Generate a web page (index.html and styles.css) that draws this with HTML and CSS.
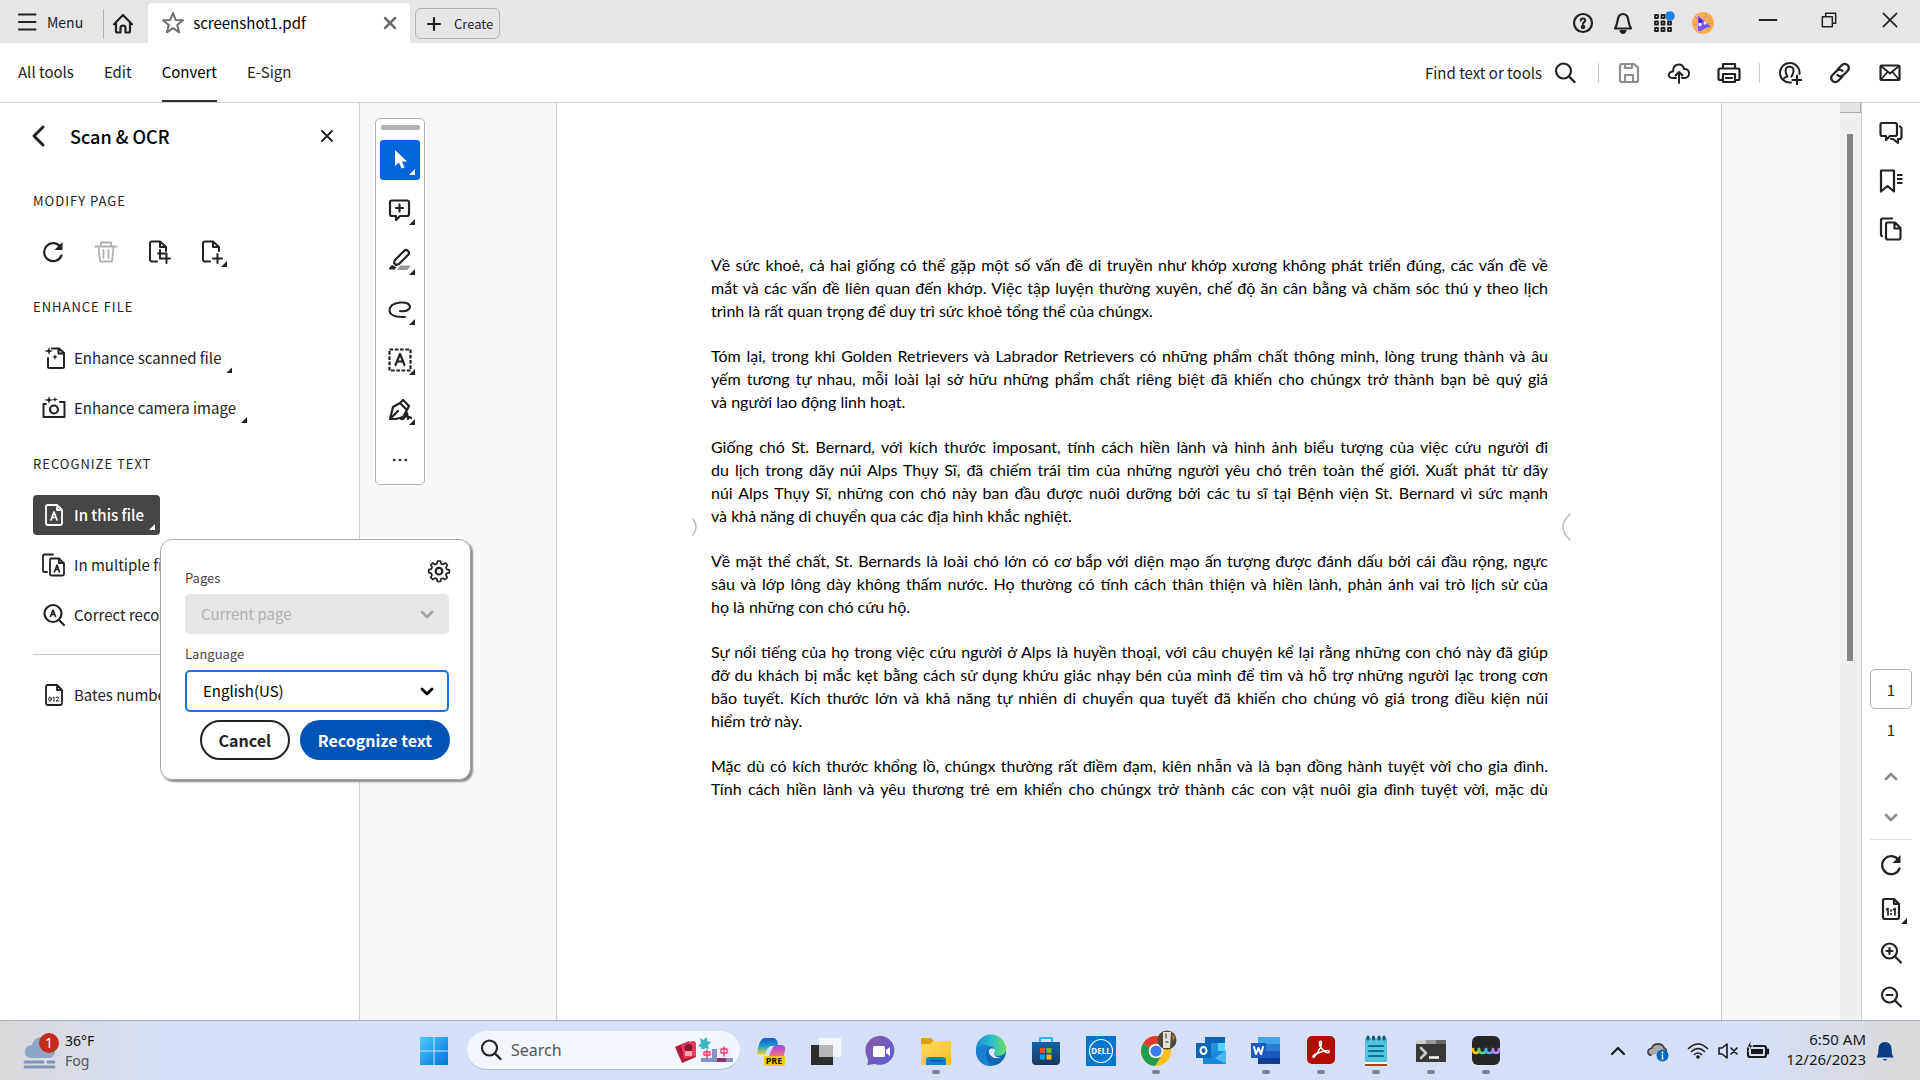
FILE: index.html
```html
<!DOCTYPE html>
<html lang="en">
<head>
<meta charset="utf-8">
<title>screenshot1.pdf</title>
<link rel="stylesheet" href="styles.css">
</head>
<body>
<svg class="sprite" aria-hidden="true">
  <defs>
    <symbol id="menu" viewBox="0 0 24 24"><path d="M4 4.500h16.500M4 12h16.500M4 19.500h16.500" stroke-width="2"/></symbol>
    <symbol id="home" viewBox="0 0 24 24"><path d="M3 12.200 12 3l9 9.200M5 11v8q0 1.500 1.500 1.500h3V16q0-2.300 2.500-2.300t2.500 2.300v4.500h3q1.500 0 1.500-1.500v-8" stroke-width="2.200"/></symbol>
    <symbol id="star" viewBox="0 0 24 24"><path d="m12 2 2.700 7 7.300.3-5.800 4.700 2 7.300-6.200-4.200-6.200 4.200 2-7.300L2 9.300 9.300 9z" stroke-width="2"/></symbol>
    <symbol id="close" viewBox="0 0 24 24"><path d="m6 6 12 12M18 6 6 18"/></symbol>
    <symbol id="plus" viewBox="0 0 24 24"><path d="M12 6v12M6 12h12"/></symbol>
    <symbol id="help" viewBox="0 0 24 24"><circle cx="12" cy="12" r="9"/><path d="M9.700 9.600q.2-2.100 2.300-2.100 2.200 0 2.200 1.900 0 1.100-1.200 1.800-1 .6-1 1.900" stroke-width="2"/><circle cx="12" cy="16" r="1.200" class="solid"/></symbol>
    <symbol id="bell" viewBox="0 0 24 24"><path d="M12 3c-7 0-4 9-8 14.500h16C16 12 19 3 12 3z"/><path d="M9.500 20q2.500 4 5 0z" class="solid"/></symbol>
    <symbol id="apps" viewBox="0 0 24 24"><path d="M4 4h3v3H4zM10.500 4h3v3h-3zM4 10.500h3v3H4zM10.500 10.500h3v3h-3zM17 10.500h3v3h-3zM4 17h3v3H4zM10.500 17h3v3h-3zM17 17h3v3h-3z" stroke-width="1.800"/><circle cx="19" cy="5" r="4.800" fill="#2680eb" stroke="none"/></symbol>
    <symbol id="avatar" viewBox="0 0 24 24"><circle cx="12" cy="12" r="11" fill="#ffad4f" stroke="none"/><path d="m4 6 4 2M3 14l4-1M15 2l-1 5M20 6l-4 4M22 13l-5-1M18 20l-4-3M9 22l1-4" stroke="#a3a58d" stroke-width="1"/><path d="M7 5v15q5 0 7-3l6-1-5-5z" fill="#7754ed" stroke="none"/><path d="M8 7v6l4-3z" fill="#3e24ad" stroke="none"/><circle cx="9" cy="13.500" r="1.700" fill="#fff" stroke="none"/><circle cx="14" cy="12" r="1.500" fill="#fff" stroke="none"/></symbol>
    <symbol id="minimize" viewBox="0 0 24 24"><path d="M2 12h20" stroke-width="2.400"/></symbol>
    <symbol id="restore" viewBox="0 0 24 24"><path d="M4 8h12v12H4zM8 8V4h12v12h-4" stroke-width="1.800"/></symbol>
    <symbol id="window-close" viewBox="0 0 24 24"><path d="m4 4 16 16M20 4 4 20" stroke-width="2"/></symbol>
    <symbol id="search" viewBox="0 0 24 24"><circle cx="10.500" cy="10" r="7.500"/><path d="m16 15.500 5.500 5.500" stroke-width="2.400"/></symbol>
    <symbol id="save" viewBox="0 0 24 24"><path d="M3 5q0-2 2-2h12l4 3.500V19q0 2-2 2H5q-2 0-2-2zM8 3v4h7V3M8 21v-7h8v7"/></symbol>
    <symbol id="cloud" viewBox="0 0 24 24"><path d="M9 17H5q-4-.5-3-4 1-2.500 4-2.500Q6 4 11.500 3.500 16 3.300 17 8q5-.3 5 4.500-.2 4-4 4.500h-3M12 22V11M8.500 14.500 12 11l3.500 3.500" stroke-width="2"/></symbol>
    <symbol id="print" viewBox="0 0 24 24"><path d="M6 7V3h12v4M6 19H3q-1.500 0-1.500-1.500V9Q1.500 7.500 3 7.500h18q1.500 0 1.500 1.500v8.500q0 1.500-1.500 1.500h-3M6 13h12v8H6zM9 17h6"/></symbol>
    <symbol id="user-add" viewBox="0 0 24 24"><path d="M13 21.500A9.800 9.800 0 1 1 21.500 13M5 18.500q1.500-2.500 4.500-3-.5-1-1.500-3Q6.500 6 11.500 5.500 17 6 15 12.500l-1.500 3M19 14.500v9M14.500 19h9" stroke-width="2"/></symbol>
    <symbol id="link" viewBox="0 0 24 24"><path d="m10 8 4-4q3-2.500 6 .5 2 3-.5 5.500L15 14.500q-3 2-5.500-.5M14 16l-4 4q-3 2.500-6-.5-2-3 .5-5.500L9 9.500q3-2 5.500.5"/></symbol>
    <symbol id="mail" viewBox="0 0 24 24"><rect x="2.500" y="4.500" width="19" height="14.500" rx="1"/><path d="m3 5 9 7.500L21 5M3 18.500l6.500-7.500M21 18.500 14.500 11" stroke-width="1.800"/></symbol>
    <symbol id="back" viewBox="0 0 24 24"><path d="m16 3-9 9 9 9" stroke-width="3"/></symbol>
    <symbol id="rotate" viewBox="0 0 24 24"><path d="M20.500 15.500A9 9 0 1 1 19.500 7"/><path d="M21.500 2v8h-8z" class="solid" stroke="none"/></symbol>
    <symbol id="trash" viewBox="0 0 24 24"><path d="M1.500 6.500h21M7 6V2.500h10V6M4.500 7 6 21.500h12L19.500 7M9.500 10v8M14.500 10v8" stroke-width="1.800"/></symbol>
    <symbol id="page-crop" viewBox="0 0 24 24"><path d="M10 21.500H5q-2 0-2-2v-16q0-2 2-2h8L19 7v4M13 1.500V7h6M13 10v8.500h10M11 13.500h8.500V23" stroke-width="2"/></symbol>
    <symbol id="page-add" viewBox="0 0 24 24"><path d="M10 21.500H5q-2 0-2-2v-16q0-2 2-2h8L19 7v4M13 1.500V7h6M17.500 14v9M13 18.500h9" stroke-width="2"/></symbol>
    <symbol id="scan-enhance" viewBox="0 0 24 24"><path d="M10 2.500h7L22 7v13.500q0 1.500-1.500 1.500h-13Q6 22 6 20.500V12M16.500 2.500v5H22" stroke-width="2"/><path d="m7 1 1 3 3 1-3 1-1 3-1-3-4-1 4-1zM13 8l.8 2.200 2.200.8-2.200.8L13 14l-.8-2.200L10 11l2.200-.8z" class="solid" stroke="none"/></symbol>
    <symbol id="camera" viewBox="0 0 24 24"><path d="M4 8H1.500v13h21V6H18M1.500 8v4" stroke-width="2"/><circle cx="12" cy="13.500" r="4"/><path d="m7 0 1 3 3 1-3 1-1 3-1-3-4-1 4-1zM13 1l.7 1.800 2.300.7-2.300.7L13 6l-.7-1.800-2.300-.7 2.300-.7z" class="solid" stroke="none"/></symbol>
    <symbol id="page-a" viewBox="0 0 24 24"><path d="M5 2h10l5 5v13q0 2-2 2H6q-2 0-2-2V4q0-2 2-2M15 2v5h5" stroke-width="1.800"/><path d="m9 17 3-8 3 8M10 14.500h4" stroke-width="1.700"/></symbol>
    <symbol id="pages-a" viewBox="0 0 24 24"><path d="M5 19H2.500Q1 19 1 17.500V3q0-1.500 1.500-1.500H11M9 5.500h8l5 5V21q0 1.500-1.500 1.500h-11Q8 22.500 8 21V7q0-1.500 1.500-1.500M17 5.500V10h5" stroke-width="1.800"/><path d="m12.500 19 2.500-7 2.500 7M13.500 16.500h3" stroke-width="1.600"/></symbol>
    <symbol id="search-a" viewBox="0 0 24 24"><circle cx="11" cy="10.500" r="8.500"/><path d="m17 17 5 5"/><path d="m8.500 13.500 2.500-6.500 2.500 6.500M9.500 11.500h3" stroke-width="1.600"/></symbol>
    <symbol id="page-num" viewBox="0 0 24 24"><path d="M5.500 2H15l5 5v13q0 2-2 2H6q-2 0-2-2V4q0-2 1.500-2M15 2v5h5" stroke-width="1.800"/><ellipse cx="8" cy="16" rx="1.300" ry="2" stroke-width="1"/><path d="M11 14.500l1-.5v4.500M14 14.500q2.500-1.500 2.500.5 0 1-2.500 3H17" stroke-width="1"/></symbol>
    <symbol id="page-ratio" viewBox="0 0 24 24"><path d="M5.500 2H15l5 5v13q0 2-2 2H6q-2 0-2-2V4q0-2 1.500-2M15 2v5h5"/><path d="m7.500 12.500 1.500-1v6.500M14.500 12.500l1.500-1v6.500M12 13v1M12 16.500v1" stroke-width="1.700"/></symbol>
    <symbol id="cursor" viewBox="0 0 24 24"><path d="M7 2v16l4-3.500 2.500 6 3-1.200-2.500-5.800h5z" class="solid" stroke="none"/></symbol>
    <symbol id="comment-add" viewBox="0 0 24 24"><path d="M4 2.500h15q2 0 2 2V16q0 2-2 2h-7l-4 4v-4H4q-2 0-2-2V4.500q0-2 2-2zM11.500 6.500v7M8 10h7"/></symbol>
    <symbol id="marker" viewBox="0 0 24 24"><path d="m7 12 9-9q2-2 4 0t0 4l-9 9-3 1-2-2z"/><path d="M1 21.500q0-3 3.500-4.500l4 2.500-2 2z" class="solid" stroke="none"/><path d="m12 17.500h11l-3.500 4.500H9z" fill="#999" stroke="none"/></symbol>
    <symbol id="lasso" viewBox="0 0 24 24"><path d="M12 13q8 1 10-3.500Q22 4 12.500 4.500 1.500 5.500 1.500 12.500 2 19.500 17 19" stroke-width="2"/></symbol>
    <symbol id="text-box" viewBox="0 0 24 24"><rect x="1.500" y="1.500" width="21" height="21" stroke-dasharray="3.700 1.550" stroke-linecap="butt"/><path d="m7.500 17 4.500-11 4.500 11M9 13.500h6"/></symbol>
    <symbol id="pen" viewBox="0 0 24 24"><path d="M2 21 5 9l7-4 7 7-4 7-7 2zM12 5l3-3 6 6-2 4M2 21l8-8M13 21q4 .5 6-6l1 6q0-3 3-1" stroke-width="2.200"/></symbol>
    <symbol id="dots" viewBox="0 0 24 24"><g class="solid" stroke="none"><circle cx="5" cy="12" r="1.600"/><circle cx="12" cy="12" r="1.600"/><circle cx="19" cy="12" r="1.600"/></g></symbol>
    <symbol id="chats" viewBox="0 0 24 24"><path d="M3 2h13q2 0 2 2v9q0 2-2 2h-5l-4 4v-4H3q-1.500 0-1.500-2V4Q1.500 2 3 2zM21 5.500q1.500.5 1.500 2V16q0 2-2 2H19v4l-5-4h-2"/></symbol>
    <symbol id="bookmark" viewBox="0 0 24 24"><path d="M2 1.500h13v21L8.500 17 2 22.500zM18 6h5.500M18 10h5.500M18 14h5.500" stroke-linecap="butt"/></symbol>
    <symbol id="copies" viewBox="0 0 24 24"><path d="M3 19Q2 19 2 17V3.500Q2 1.500 4 1.500h9M9 5.500h7l5.500 5.500v9.500q0 2-2 2H9q-2 0-2-2v-13q0-2 2-2M15.500 6v5.500h6"/></symbol>
    <symbol id="up" viewBox="0 0 24 24"><path d="m7 15 5-5 5 5" stroke-width="2.800"/></symbol>
    <symbol id="down" viewBox="0 0 24 24"><path d="m7 10 5 5 5-5" stroke-width="2.800"/></symbol>
    <symbol id="zoom-in" viewBox="0 0 24 24"><circle cx="10.500" cy="10" r="7.500"/><path d="m16 15.500 6 6M10.500 7v6M7.500 10h6"/></symbol>
    <symbol id="zoom-out" viewBox="0 0 24 24"><circle cx="10.500" cy="10" r="7.500"/><path d="m16 15.500 6 6M7.500 10h6"/></symbol>
    <symbol id="gear" viewBox="0 0 24 24"><path d="M10.500 2h3l.6 2.700 2 .8L18.400 4l2 2.200L19 8.400l.8 1.900 2.500.5v3l-2.600.6-.8 1.900 1.400 2.200-2.100 2-2.300-1.300-1.900.8-.6 2.500h-3l-.5-2.600-2-.8-2.200 1.400-2.100-2.100L5 16.200l-.8-1.900L1.700 13.700v-3l2.600-.5.8-2L3.700 6.100 5.800 4 8 5.400l2-.8z" stroke-width="1.700"/><circle cx="12" cy="12.200" r="3.300"/></symbol>
    <linearGradient id="g-win" x1="0" y1="0" x2="1" y2="1"><stop offset="0" stop-color="#4cc9fb"/><stop offset="1" stop-color="#0074d6"/></linearGradient>
    <linearGradient id="g-rain" x1="0" y1="0" x2="0" y2="1"><stop offset="0" stop-color="#1556cf"/><stop offset=".5" stop-color="#22a3c9"/><stop offset="1" stop-color="#ffd21f"/></linearGradient>
    <linearGradient id="g-pink" x1="0" y1="0" x2="0" y2="1"><stop offset="0" stop-color="#a445ee"/><stop offset="1" stop-color="#ff7a62"/></linearGradient>
    <linearGradient id="g-chat" x1="0" y1="0" x2="1" y2="1"><stop offset="0" stop-color="#8a5aa8"/><stop offset="1" stop-color="#5a5ed6"/></linearGradient>
    <linearGradient id="g-folder" x1="0" y1="0" x2="1" y2="1"><stop offset="0" stop-color="#ffdb60"/><stop offset="1" stop-color="#f9bd2a"/></linearGradient>
    <linearGradient id="g-edge" x1="0" y1="0" x2="1" y2="0"><stop offset="0" stop-color="#1b8fd0"/><stop offset=".5" stop-color="#2cb9cf"/><stop offset="1" stop-color="#6ae05a"/></linearGradient>
    <linearGradient id="g-store" x1="0" y1="0" x2="0" y2="1"><stop offset="0" stop-color="#1065ae"/><stop offset="1" stop-color="#1e3459"/></linearGradient>
  </defs>
</svg>

<header class="titlebar">
  <button class="menu-button"><svg class="i24"><use href="#menu"/></svg>Menu</button>
  <button class="home-button" aria-label="Home"><svg class="i24"><use href="#home"/></svg></button>
  <div class="tab">
    <svg class="i24 tab-star"><use href="#star"/></svg>
    <span class="tab-name">screenshot1.pdf</span>
    <button class="tab-close" aria-label="Close tab"><svg class="i24"><use href="#close"/></svg></button>
  </div>
  <button class="create-button"><svg class="i24"><use href="#plus"/></svg>Create</button>
  <div class="account">
    <button aria-label="Help"><svg class="i24"><use href="#help"/></svg></button>
    <button aria-label="Notifications"><svg class="i24"><use href="#bell"/></svg></button>
    <button aria-label="Apps"><svg class="i24"><use href="#apps"/></svg></button>
    <button aria-label="Profile"><svg class="i24"><use href="#avatar"/></svg></button>
  </div>
  <div class="window-controls">
    <button aria-label="Minimize"><svg class="i20"><use href="#minimize"/></svg></button>
    <button aria-label="Restore"><svg class="i20"><use href="#restore"/></svg></button>
    <button aria-label="Close"><svg class="i20"><use href="#window-close"/></svg></button>
  </div>
</header>

<nav class="toolbar">
  <div class="modes">
    <a href="#all">All tools</a>
    <a href="#edit">Edit</a>
    <a href="#convert" class="current">Convert</a>
    <a href="#sign">E-Sign</a>
  </div>
  <button class="find">Find text or tools<svg class="i24"><use href="#search"/></svg></button>
  <div class="actions">
    <button class="muted" aria-label="Save"><svg class="i24"><use href="#save"/></svg></button>
    <button aria-label="Upload"><svg class="i24"><use href="#cloud"/></svg></button>
    <button aria-label="Print"><svg class="i24"><use href="#print"/></svg></button>
  </div>
  <div class="actions">
    <button aria-label="Share"><svg class="i24"><use href="#user-add"/></svg></button>
    <button aria-label="Copy link"><svg class="i24"><use href="#link"/></svg></button>
    <button aria-label="Send by mail"><svg class="i24"><use href="#mail"/></svg></button>
  </div>
</nav>

<main class="workspace">
  <aside class="panel">
    <div class="panel-head">
      <button aria-label="Back"><svg class="i24"><use href="#back"/></svg></button>
      <h1>Scan &amp; OCR</h1>
      <button aria-label="Close panel"><svg class="i20"><use href="#close"/></svg></button>
    </div>
    <h2>MODIFY PAGE</h2>
    <div class="page-tools">
      <button aria-label="Rotate"><svg class="i24"><use href="#rotate"/></svg></button>
      <button class="faded" aria-label="Delete"><svg class="i24"><use href="#trash"/></svg></button>
      <button aria-label="Crop"><svg class="i24"><use href="#page-crop"/></svg></button>
      <button class="more" aria-label="Insert"><svg class="i24"><use href="#page-add"/></svg></button>
    </div>
    <h2>ENHANCE FILE</h2>
    <div class="tool-list">
      <button class="more"><svg class="i24"><use href="#scan-enhance"/></svg>Enhance scanned file</button>
      <button class="more"><svg class="i24"><use href="#camera"/></svg>Enhance camera image</button>
    </div>
    <h2>RECOGNIZE TEXT</h2>
    <div class="tool-list">
      <div class="popup-anchor">
        <button class="more selected"><svg class="i24"><use href="#page-a"/></svg>In this file</button>
        <form class="popup">
          <button type="button" class="settings" aria-label="Settings"><svg class="i24"><use href="#gear"/></svg></button>
          <label for="pages">Pages</label>
          <div class="field">
            <select id="pages" disabled><option>Current page</option></select>
            <svg class="i24"><use href="#down"/></svg>
          </div>
          <label for="language">Language</label>
          <div class="field focused">
            <select id="language"><option>English(US)</option></select>
            <svg class="i24"><use href="#down"/></svg>
          </div>
          <div class="popup-actions">
            <button type="button" class="cancel">Cancel</button>
            <button type="button" class="confirm">Recognize text</button>
          </div>
        </form>
      </div>
      <button><svg class="i24"><use href="#pages-a"/></svg>In multiple files</button>
      <button><svg class="i24"><use href="#search-a"/></svg>Correct recognized text</button>
      <hr>
      <button><svg class="i24"><use href="#page-num"/></svg>Bates numbering</button>
    </div>
  </aside>

  <div class="canvas">
    <div class="palette">
      <span class="grip"></span>
      <button class="more active" aria-label="Select"><svg class="i24"><use href="#cursor"/></svg></button>
      <button class="more" aria-label="Comment"><svg class="i24"><use href="#comment-add"/></svg></button>
      <button class="more" aria-label="Highlight"><svg class="i24"><use href="#marker"/></svg></button>
      <button class="more" aria-label="Draw"><svg class="i24"><use href="#lasso"/></svg></button>
      <button class="more" aria-label="Text box"><svg class="i24"><use href="#text-box"/></svg></button>
      <button class="more" aria-label="Sign"><svg class="i24"><use href="#pen"/></svg></button>
      <button aria-label="More tools"><svg class="i20"><use href="#dots"/></svg></button>
    </div>
    <article class="page" lang="vi">
      <svg class="turn turn-left" viewBox="0 0 8 28"><path d="M2 6q6 8 0 16"/></svg>
      <svg class="turn turn-right" viewBox="0 0 8 28"><path d="M8 1q-14 13 0 26"/></svg>
      <p><span>Về sức khoẻ, cả hai giống có thể gặp một số vấn đề di truyền như khớp xương không phát triển đúng, các vấn đề về</span> <span>mắt và các vấn đề liên quan đến khớp. Việc tập luyện thường xuyên, chế độ ăn cân bằng và chăm sóc thú y theo lịch</span> <span>trình là rất quan trọng để duy trì sức khoẻ tổng thể của chúngx.</span></p>
      <p><span>Tóm lại, trong khi Golden Retrievers và Labrador Retrievers có những phẩm chất thông minh, lòng trung thành và âu</span> <span>yếm tương tự nhau, mỗi loài lại sở hữu những phẩm chất riêng biệt đã khiến cho chúngx trở thành bạn bè quý giá</span> <span>và người lao động linh hoạt.</span></p>
      <p><span>Giống chó St. Bernard, với kích thước imposant, tính cách hiền lành và hình ảnh biểu tượng của việc cứu người đi</span> <span>du lịch trong dãy núi Alps Thụy Sĩ, đã chiếm trái tim của những người yêu chó trên toàn thế giới. Xuất phát từ dãy</span> <span>núi Alps Thụy Sĩ, những con chó này ban đầu được nuôi dưỡng bởi các tu sĩ tại Bệnh viện St. Bernard vì sức mạnh</span> <span>và khả năng di chuyển qua các địa hình khắc nghiệt.</span></p>
      <p><span>Về mặt thể chất, St. Bernards là loài chó lớn có cơ bắp với diện mạo ấn tượng được đánh dấu bởi cái đầu rộng, ngực</span> <span>sâu và lớp lông dày không thấm nước. Họ thường có tính cách thân thiện và hiền lành, phản ánh vai trò lịch sử của</span> <span>họ là những con chó cứu hộ.</span></p>
      <p><span>Sự nổi tiếng của họ trong việc cứu người ở Alps là huyền thoại, với câu chuyện kể lại rằng những con chó này đã giúp</span> <span>đỡ du khách bị mắc kẹt bằng cách sử dụng khứu giác nhạy bén của mình để tìm và hỗ trợ những người lạc trong cơn</span> <span>bão tuyết. Kích thước lớn và khả năng tự nhiên di chuyển qua tuyết đã khiến cho chúng vô giá trong điều kiện núi</span> <span>hiểm trở này.</span></p>
      <p class="continued"><span>Mặc dù có kích thước khổng lồ, chúngx thường rất điềm đạm, kiên nhẫn và là bạn đồng hành tuyệt vời cho gia đình.</span> <span>Tính cách hiền lành và yêu thương trẻ em khiến cho chúngx trở thành các con vật nuôi gia đình tuyệt vời, mặc dù</span></p>
    </article>
    <div class="scrollbar"><span class="scroll-cap"></span><span class="scroll-thumb"></span></div>
  </div>

  <aside class="rail">
    <div class="rail-top">
      <button aria-label="Comments"><svg class="i24"><use href="#chats"/></svg></button>
      <button aria-label="Bookmarks"><svg class="i24"><use href="#bookmark"/></svg></button>
      <button aria-label="Pages"><svg class="i24"><use href="#copies"/></svg></button>
    </div>
    <div class="rail-pages">
      <input type="text" value="1" aria-label="Current page">
      <span>1</span>
      <button aria-label="Previous page"><svg class="i24"><use href="#up"/></svg></button>
      <button aria-label="Next page"><svg class="i24"><use href="#down"/></svg></button>
    </div>
    <div class="rail-view">
      <button aria-label="Rotate view"><svg class="i24"><use href="#rotate"/></svg></button>
      <button class="more" aria-label="Fit"><svg class="i24"><use href="#page-ratio"/></svg></button>
      <button aria-label="Zoom in"><svg class="i24"><use href="#zoom-in"/></svg></button>
      <button aria-label="Zoom out"><svg class="i24"><use href="#zoom-out"/></svg></button>
    </div>
  </aside>
</main>

<footer class="taskbar">
  <button class="weather">
    <svg class="weather-icon" viewBox="0 0 36 38"><path d="M7 26q-7-1-6-7 1-6 7-6Q10 5 18 5q10 0 11 9 5 7-2 12z" fill="#8fa5c4" stroke="none"/><path d="M1 30h18M24 30h6M1 35h29" stroke="#7f92b8" stroke-width="3"/><circle cx="25" cy="11" r="10" fill="#c42b1c" stroke="none"/><text x="25" y="16" text-anchor="middle">1</text></svg>
    <span class="weather-text"><span>36°F</span><span class="dim">Fog</span></span>
  </button>
  <div class="task-center">
    <button class="start" aria-label="Start"><svg class="app-icon" viewBox="0 0 30 30"><path d="M1 1h13.500v13.500H1zM15.500 1H29v13.500H15.500zM1 15.500h13.500V29H1zM15.500 15.500H29V29H15.500z" fill="url(#g-win)" stroke="none"/></svg></button>
    <div class="task-search">
      <svg class="i24"><use href="#search"/></svg>
      <input type="text" placeholder="Search" aria-label="Search">
      <svg class="games" viewBox="0 0 60 28"><g stroke="none"><path d="m1 11 14-6 7 16-14 6z" fill="#b3173c"/><path d="m7 8 12-3q3 0 3 3v12l-12 3z" fill="#e8395e"/><circle cx="14.500" cy="12" r="4" fill="#8f1230"/><path d="M11 15h7v5h-7z" fill="#f7a3b3"/><path d="m26 2 3 2 4-3v4l4 1-3 3 1 4-4-1-3 3-1-4-3-1 3-3z" fill="#3fb5c9"/><path d="M27 13h13v9H27zM43 11h14v10H43z" fill="#f4ecf5"/><path d="M27 22h32v4H27zM38 13h5v9h-5z" fill="#8592c7"/><path d="M43 22h9v4h-9z" fill="#8a3465"/></g><path d="M30 16h6v3h-6zM33 14v8M47 13h6v4h-6zM50 11v9" stroke="#e8396b" stroke-width="1.300"/></svg>
    </div>
    <div class="apps">
      <button aria-label="Copilot"><svg class="app-icon" viewBox="0 0 30 30"><g stroke="none"><path d="M1 18Q3 2 9 2h9q4 1 4 8h-6q-5 0-7 9z" fill="url(#g-rain)"/><path d="M13 21q3-12 8-12h5q4 1 3 6l-2 7z" fill="url(#g-pink)"/><rect x="8" y="20" width="21" height="10" rx="2" fill="#ffc800"/></g><text x="18" y="28" text-anchor="middle" class="tag">PRE</text></svg></button>
      <button aria-label="Task view"><svg class="app-icon" viewBox="0 0 30 30"><g stroke="none"><path d="M0 9h22v20H0z" fill="#2d2d2d"/><path d="M8 2h22v19H8z" fill="#f7f7f7" opacity=".9"/><path d="M8 9h14v12H8z" fill="#b6b6b6"/></g></svg></button>
      <button aria-label="Chat"><svg class="app-icon" viewBox="0 0 30 30"><g stroke="none"><path d="M1 29q2-4 0-8A14.500 14.500 0 1 1 9 28z" fill="url(#g-chat)"/><rect x="7" y="10" width="12" height="11" rx="1.500" fill="#fff"/><path d="m20 14 4-3v9l-4-3z" fill="#fff"/></g></svg></button>
      <button class="running" aria-label="Files"><svg class="app-icon" viewBox="0 0 30 30"><g stroke="none"><path d="M0 3q0-1 1-1h9l3 3h-1v5H0z" fill="#e0a010"/><path d="M0 8h9l4-3h17v24H0z" fill="url(#g-folder)"/><path d="M5 29v-5q0-3 3-3h14q3 0 3 3v5z" fill="#0f7fcb"/><path d="M9 24h13v1.500H9z" fill="#0a559a"/></g></svg></button>
      <button aria-label="Edge"><svg class="app-icon" viewBox="0 0 30 30"><g stroke="none"><circle cx="15" cy="15" r="15" fill="#1167b5"/><path d="M0 14A15 15 0 0 1 30 13q0 7-8 7-5 0-4-4 1-6-6-6-8 0-12 4z" fill="url(#g-edge)"/><path d="M0 14q3-5 9-5 4 0 5 2-5 3-4 9 1 6 7 10Q1 31 0 14z" fill="#1a80d2"/><path d="M13 14q2-3 5-1 2 2 0 4 0 5 7 4-6 3-10-1-3-3-2-6z" fill="#dbe4f8"/></g></svg></button>
      <button aria-label="Store"><svg class="app-icon" viewBox="0 0 30 30"><path d="M9 7V2h12v5" stroke="#2cb7ee" stroke-width="2"/><g stroke="none"><path d="M1 6h28v19q0 4-4 4H5q-4 0-4-4z" fill="url(#g-store)"/><path d="M9 12h5v5H9z" fill="#f25022"/><path d="M15.500 12h5v5h-5z" fill="#7fba00"/><path d="M9 18.500h5v5H9z" fill="#00a4ef"/><path d="M15.500 18.500h5v5h-5z" fill="#ffb900"/></g></svg></button>
      <button aria-label="Dell"><svg class="app-icon" viewBox="0 0 30 30"><path d="M0 0h30v30H0z" fill="#0076ce" stroke="none"/><circle cx="15" cy="15" r="11.500" stroke="#fff" stroke-width="1.200"/><text x="15" y="18" text-anchor="middle" class="dell">DELL</text></svg></button>
      <button class="running" aria-label="Chrome"><svg class="app-icon" viewBox="0 0 30 30"><g stroke="none"><circle cx="15" cy="15" r="15" fill="#fbc116"/><path d="M15 15 2 7.500A15 15 0 0 1 28 7.500L15 8z" fill="#e33b2e"/><path d="M2 7.500A15 15 0 0 0 14 30l7-11-6-4z" fill="#229b4b"/><circle cx="15" cy="15" r="7.300" fill="#fff"/><circle cx="15" cy="15" r="5.600" fill="#3b7ded"/><circle cx="26" cy="4" r="9.500" fill="#51483c"/><path d="M22-4h8l-1 16h-7z" fill="#e5e2da"/><path d="M31-2l3 3-2 4z" fill="#bb8537"/></g><path d="M25-2v4M25 6h2" stroke="#666" stroke-width="1.500"/></svg></button>
      <button aria-label="Outlook"><svg class="app-icon" viewBox="0 0 30 30"><g stroke="none"><path d="M9 1h20v15H9z" fill="#0c64b4"/><path d="M9 7h13v8H9z" fill="#2390dc"/><path d="M22 7h7v9h-7z" fill="#55d1fa"/><path d="M7 15h23v13H7z" fill="#1a88da"/><path d="m30 14-11 8 11 6z" fill="#4bb6ed"/><path d="M0 7h15v15H0z" fill="#0967b5"/></g><ellipse cx="7.500" cy="14.500" rx="3" ry="3.500" stroke="#fff" stroke-width="2"/></svg></button>
      <button class="running" aria-label="Word"><svg class="app-icon" viewBox="0 0 30 30"><g stroke="none"><path d="M7 1h22v7H7z" fill="#41a5ee"/><path d="M7 8h22v7H7z" fill="#2b7cd3"/><path d="M7 15h22v7H7z" fill="#185abd"/><path d="M7 22h22v6H7z" fill="#103f91"/><path d="M0 7h15v15H0z" fill="#1b5bbe"/></g><path d="m3 11 2 7 2.500-6 2.500 6 2-7" stroke="#fff" stroke-width="2"/></svg></button>
      <button class="running" aria-label="Acrobat"><svg class="app-icon" viewBox="0 0 30 30"><rect x="1" y="0" width="28" height="28" rx="5" fill="#b30b00" stroke="none"/><path d="M7 21q-1-2 8-5t8 0q0 2-5-1-5-4-4.500-9 1.500-2 2 1Q15 12 9 20q-1.500 2-2 1z" stroke="#fff" stroke-width="1.600"/></svg></button>
      <button class="running" aria-label="Notepad"><svg class="app-icon" viewBox="0 0 30 30"><g stroke="none"><path d="M4 2h22v25H4z" fill="#53c4dd"/><path d="M4 26h22v2H4z" fill="#fff"/><path d="M4 28h22v2H4z" fill="#a6460c"/></g><path d="M8 10h14M8 15h14M8 20h14" stroke="#087091" stroke-width="2"/><path d="M7 1v2M12.500 1v2M18 1v2M23 1v2" stroke="#0b5773" stroke-width="3"/></svg></button>
      <button class="running" aria-label="Terminal"><svg class="app-icon" viewBox="0 0 30 30"><g stroke="none"><path d="M0 4h30v22H0z" fill="#383838"/><path d="M0 4h10v4H0z" fill="#ccc"/><path d="M10 4h10v4H10z" fill="#999"/><path d="M20 4h10v4H20z" fill="#666"/></g><path d="m5 12 5 5-5 5" stroke="#ccc" stroke-width="2.500"/><path d="M13 21.500h10" stroke="#fff" stroke-width="2.500" stroke-linecap="butt"/></svg></button>
      <button class="running" aria-label="Wave"><svg class="app-icon" viewBox="0 0 30 30"><rect x="1" y="0" width="28" height="29" rx="6" fill="#262626" stroke="none"/><g stroke-width="2.600"><path d="M2 13q0 4 3 4t3-4" stroke="#ffc715"/><path d="M8 13q0 4 3.500 4t3.500-4" stroke="#43dd93"/><path d="M15 13q0 4 3.500 4t3.500-4" stroke="#55a5f2"/><path d="M22 13q0 4 3 4t3-4" stroke="#bd83fa"/></g></svg></button>
    </div>
  </div>
  <div class="tray">
    <svg class="i24" viewBox="0 0 24 24"><path d="m6 15 6-6 6 6"/></svg>
    <svg class="i24 tray-cloud" viewBox="0 0 24 24"><path d="M5 16q-3 0-3-3t4-4q1-4 6-4 5 0 6 4 3 1 2 4" fill="#aaa" stroke="#444" stroke-width="1.800"/><circle cx="16.500" cy="16.500" r="6" fill="#0067c0" stroke="none"/><path d="M16.500 13v1M16.500 16v4" stroke="#fff" stroke-width="1.600"/></svg>
    <svg class="i24" viewBox="0 0 24 24"><path d="M2.500 9.500q9.500-9 19 0M5.500 12.500q6.500-6 13 0M8.500 15.500q3.500-3 7 0" stroke-width="1.600"/><circle cx="12" cy="18" r="1.800" class="solid" stroke="none"/></svg>
    <svg class="i24" viewBox="0 0 24 24"><path d="M3 9h3l5-4v14l-5-4H3zM15 9l6 6M21 9l-6 6" stroke-width="1.600"/></svg>
    <svg class="i24" viewBox="0 0 24 24"><rect x="2" y="7" width="18" height="11" rx="2"/><path d="M5 10h12v5H5z" class="solid" stroke="none"/><path d="M22 10.500v4"/><path d="m5 1-4 7h3l-1 5 4-7H5z" class="solid" stroke="#d7e0f4" stroke-width="1"/></svg>
    <div class="clock"><span>6:50 AM</span><span>12/26/2023</span></div>
    <svg class="i24 tray-bell" viewBox="0 0 24 24"><path d="M12 3q-6 0-6.500 6.500L5 15l-1.500 3.500h17L19 15l-.5-5.500Q18 3 12 3zM9.500 20h5q-2.500 3-5 0z"/></svg>
  </div>
</footer>
</body>
</html>
```
FILE: styles.css
```css
* { box-sizing: border-box; }

body {
  margin: 0;
  min-height: 100vh;
  display: flex;
  flex-direction: column;
  background: #fff;
  color: #222;
  font-family: "Noto Sans CJK SC", "Noto Sans", sans-serif;
  font-size: 15px;
  line-height: 24px;
}

button, input, select { font: inherit; color: inherit; margin: 0; }
button {
  padding: 0;
  border: 0;
  background: none;
  display: flex;
  align-items: center;
  justify-content: center;
  white-space: nowrap;
}

.sprite { position: absolute; width: 0; height: 0; }
svg { fill: none; stroke: currentColor; stroke-width: 2.2; stroke-linecap: round; stroke-linejoin: round; flex: none; display: block; overflow: visible; }
svg text { stroke: none; fill: #fff; font-size: 14px; }
.solid { fill: currentColor; }
.i24 { width: 24px; height: 24px; }
.i20 { width: 20px; height: 20px; }

/* corner triangle that marks a control with further choices */
.more { position: relative; }
.more::after {
  content: "";
  position: absolute;
  right: 5px;
  bottom: 5px;
  width: 6px;
  height: 6px;
  background: currentColor;
  clip-path: polygon(100% 0, 100% 100%, 0 100%);
}

/* title bar */
.titlebar { display: flex; height: 43px; background: #e6e6e6; font-size: 14px; }
.menu-button { gap: 8px; padding-left: 15px; }
.home-button { width: 40px; margin: 9px 5px 4px 20px; padding-right: 1px; border-left: 1px solid #b1b1b1; }
.tab { width: 262px; margin-top: 3px; padding: 0 10px 0 13px; display: flex; align-items: center; gap: 8px; background: #fff; border-radius: 4px 4px 0 0; color: #6e6e6e; }
.tab-name { flex: 1; color: #000; font-size: 15px; }
.tab-close svg { width: 20px; stroke-width: 3; }
.create-button { width: 85px; height: 31px; margin: 8px 0 0 5px; gap: 8px; border: 1px solid #b1b1b1; border-radius: 6px; font-size: 13px; }
.account { display: flex; gap: 16px; margin-left: auto; padding-top: 3px; }
.window-controls { display: flex; margin-left: 22px; padding-bottom: 3px; }
.window-controls button { width: 61px; }

/* tool bar */
.toolbar { display: flex; align-items: center; height: 60px; border-bottom: 1px solid #d0d0d0; }
.modes { display: flex; align-self: stretch; gap: 30px; padding-left: 18px; flex: 1; }
.modes a { display: flex; align-items: center; color: inherit; text-decoration: none; border-bottom: 2px solid transparent; }
.modes .current { color: #000; border-color: #333; }
.find { gap: 11px; margin-right: 21px; }
.actions { display: flex; gap: 26px; padding: 0 18px; border-left: 1px solid #ccc; height: 20px; align-items: center; }
.muted { color: #8e8e8e; }

/* workspace */
.workspace { flex: 1; display: flex; }

.panel { width: 360px; flex: none; border-right: 1px solid #d0d0d0; padding: 21px 20px 0 33px; }
.panel-head { display: flex; align-items: center; height: 24px; }
.panel-head h1 { flex: 1; margin: 0 0 0 25px; font-size: 18px; font-weight: 500; color: #000; }
.panel-head button:first-child { width: 12px; }
.panel-head button:last-child { width: 24px; }
.panel h2 { margin: 0; font-size: 13px; font-weight: 400; letter-spacing: 1px; line-height: 20px; }
.panel-head + h2 { margin-top: 43px; }
.page-tools { display: flex; gap: 13px; padding: 21px 0 25px; }
.page-tools button { width: 40px; height: 40px; }
.faded { color: #b1b1b1; }
.tool-list { display: flex; flex-direction: column; align-items: flex-start; gap: 10px; padding: 21px 0 26px; }
.tool-list > button, .selected { height: 40px; padding: 0 16px 0 9px; gap: 8px; }
.tool-list hr { width: 294px; margin: 9px 0 10px; border: 0; border-top: 1px solid #ccc; }
.popup-anchor { position: relative; }
.selected { background: #464646; color: #fff; border-radius: 4px; font-weight: 500; }

/* recognition options */
.popup {
  position: absolute;
  z-index: 2;
  left: 127px;
  top: 44px;
  width: 311px;
  padding: 26px 20px 19px 24px;
  display: flex;
  flex-direction: column;
  background: #fff;
  border: 1px solid #a9a9a9;
  border-radius: 12px;
  box-shadow: 2px 2px 2px #888;
}
.popup label { font-size: 13px; color: #464646; }
.settings { position: absolute; right: 19px; top: 19px; }
.field { display: grid; margin: 4px 0 8px; width: 264px; align-items: center; }
.field > * { grid-area: 1 / 1; }
.field svg { justify-self: end; margin-right: 10px; pointer-events: none; color: #a6a6a6; }
.field select { height: 40px; width: 100%; padding: 0 16px; appearance: none; border: 0; border-radius: 5px; background: #e6e6e6; color: #b1b1b1; opacity: 1; }
.field.focused select { height: 42px; border: 2px solid #1473e6; background: #fff; color: #000; }
.field.focused svg { color: #000; }
.popup-actions { display: flex; gap: 10px; margin-left: 15px; }
.popup-actions button { height: 40px; border-radius: 20px; font-weight: 700; font-size: 16px; }
.cancel { width: 90px; border: 2px solid #222; }
.confirm { width: 151px; background: #0054b6; color: #fff; }

/* document */
.canvas { flex: 1; display: flex; background: #f8f8f8; min-width: 0; }
.palette { width: 50px; height: 367px; margin: 15px 131px 0 15px; flex: none; padding-top: 6px; display: flex; flex-direction: column; align-items: center; gap: 10px; background: #fff; border: 1px solid #b1b1b1; border-radius: 5px; }
.grip { width: 39px; height: 5px; border-radius: 2px; background: #b1b1b1; }
.palette button { width: 40px; height: 40px; flex: none; }
.palette .active { background: #0265dc; color: #fff; border-radius: 3px; }
.page { position: relative; flex: 1; min-width: 0; padding: 150px 173px 0 154px; background: #fff; border: solid #ccc; border-width: 0 1px; color: #000; font: 16px/23px Lato, "Noto Sans", sans-serif; }
.page p { margin: 0 0 22px; }
.page span { display: block; text-align: justify; text-align-last: justify; white-space: nowrap; }
.page p:not(.continued) span:last-child { text-align-last: left; }
.turn { position: absolute; top: 410px; width: 8px; height: 28px; stroke: #bbb; stroke-width: 1.5; }
.turn-left { left: 134px; }
.turn-right { right: 151px; }
.scrollbar { width: 21px; flex: none; margin-left: 118px; background: #efefef; display: flex; flex-direction: column; }
.scroll-cap { height: 10px; background: #e3e3e3; border: solid #aaa; border-width: 0 1px 1px 0; }
.scroll-thumb { width: 6px; height: 527px; margin: 21px 0 0 7px; background: #858585; }

/* right rail */
.rail { width: 59px; flex: none; border-left: 1px solid #ccc; display: flex; flex-direction: column; align-items: center; }
.rail-top { display: flex; flex-direction: column; gap: 24px; padding-top: 18px; flex: 1; }
.rail-pages { width: 42px; display: flex; flex-direction: column; align-items: center; border-bottom: 1px solid #ddd; padding-bottom: 10px; }
.rail-pages input { width: 42px; height: 40px; border: 1px solid #b1b1b1; border-radius: 5px; text-align: center; padding: 0; background: #fff; }
.rail-pages span { margin: 9px 0 22px; }
.rail-pages button { color: #8e8e8e; height: 24px; margin-bottom: 17px; }
.rail-pages button:last-child { margin-bottom: 0; }
.rail-view { display: flex; flex-direction: column; gap: 20px; padding: 13px 0 11px; }
.rail-view .more::after { right: -4px; bottom: -3px; }

/* taskbar */
.taskbar {
  height: 60px;
  display: grid;
  grid-template-columns: 1fr auto 1fr;
  border-top: 1px solid #a9b0bf;
  background: linear-gradient(90deg, #d9d9d9 0, #d5dff7 170px, #d5dff7 calc(100% - 170px), #d9dadc calc(100% - 30px));
  font-family: "Noto Sans", sans-serif;
  line-height: 20px;
}
.taskbar button { position: relative; }
.weather { justify-self: start; gap: 5px; padding-left: 24px; }
.weather-icon { width: 36px; height: 38px; }
.weather-text { display: flex; flex-direction: column; text-align: left; font-size: 14px; color: #111; }
.dim { color: #555; }
.task-center { display: flex; align-items: center; }
.start { width: 54px; }
.task-search { width: 273px; height: 39px; margin: 0 3px 0 6px; padding: 0 6px 0 12px; display: flex; align-items: center; gap: 8px; background: #f2f6fd; border-radius: 20px; border-bottom: 1px solid #aab8d2; }
.task-search input { flex: 1; min-width: 0; border: 0; background: none; font-size: 16px; padding: 0; }
.task-search input::placeholder { color: #555; opacity: 1; }
.games { width: 60px; height: 28px; }
.apps { display: flex; height: 100%; align-self: stretch; }
.apps button { width: 55px; }
.app-icon { width: 30px; height: 30px; }
svg .tag { fill: #111; font-size: 9px; font-weight: 700; }
svg .dell { font-size: 8px; font-weight: 700; }
.running::after { content: ""; position: absolute; left: 24px; bottom: 6px; width: 8px; height: 4px; border-radius: 2px; background: #7a8291; }
.tray { display: flex; align-items: center; justify-content: flex-end; padding-right: 23px; color: #1a1a1a; }
.tray > svg:first-child { margin-right: 16px; }
.tray-cloud { margin-right: 16px; }
.tray > svg:nth-child(3), .tray > svg:nth-child(4) { margin-right: 6px; }
.clock { display: flex; flex-direction: column; text-align: right; margin: 0 7px 4px 16px; }
.tray-bell path { fill: #0a3d86; stroke: none; }
```
